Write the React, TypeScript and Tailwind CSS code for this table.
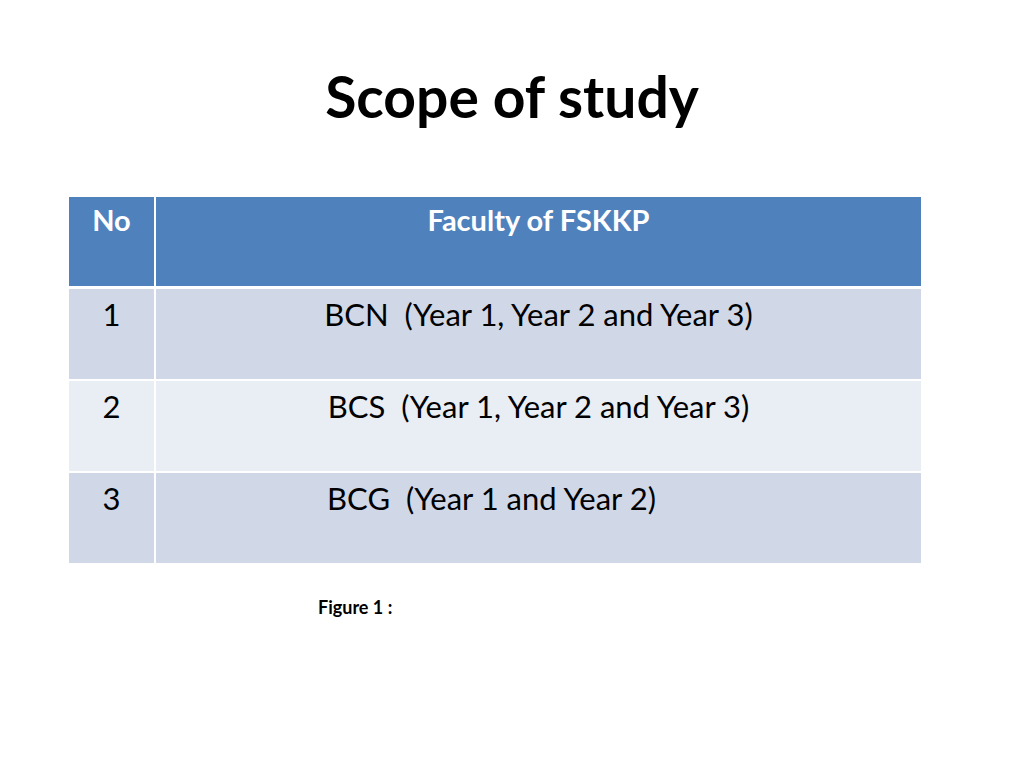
const rows = [
  { no: "1", text: "BCN  (Year 1, Year 2 and Year 3)", bg: "bg-[#d0d8e8]", pad: "" },
  { no: "2", text: "BCS  (Year 1, Year 2 and Year 3)", bg: "bg-[#e9edf4]", pad: "" },
  { no: "3", text: "BCG  (Year 1 and Year 2)", bg: "bg-[#d0d8e8]", pad: "pr-[94px]" },
];

export default function App() {
  return (
    <div className="w-[1024px] h-[768px] bg-white font-['Lato','Open_Sans',sans-serif] text-black">
      <h1 className="pt-[68px] text-center text-[57px] font-bold leading-[57px]">Scope of study</h1>

      <div className="ml-[69px] mt-[72px] w-[852px]">
        {/* header */}
        <div className="flex h-[89px] bg-[#4f81bd] text-white font-bold text-[29px] leading-[29px]">
          <div className="w-[85px] pt-[8px] text-center">No</div>
          <div className="w-[2px] bg-white" />
          <div className="flex-1 pt-[8px] text-center">Faculty of FSKKP</div>
        </div>
        <div className="h-[3px]" />

        {rows.map((r, i) => (
          <div key={r.no}>
            <div className={`flex h-[90px] ${r.bg} text-[31px] leading-[31px]`}>
              <div className="w-[85px] pt-[10px] text-center">{r.no}</div>
              <div className="w-[2px] bg-white" />
              <div className={`flex-1 pt-[10px] text-center whitespace-pre ${r.pad}`}>{r.text}</div>
            </div>
            {i < rows.length - 1 && <div className="h-[2px]" />}
          </div>
        ))}
      </div>

      <div className="ml-[318px] mt-[35px] text-[18px] leading-[18px] font-bold">Figure 1 :</div>
    </div>
  );
}
